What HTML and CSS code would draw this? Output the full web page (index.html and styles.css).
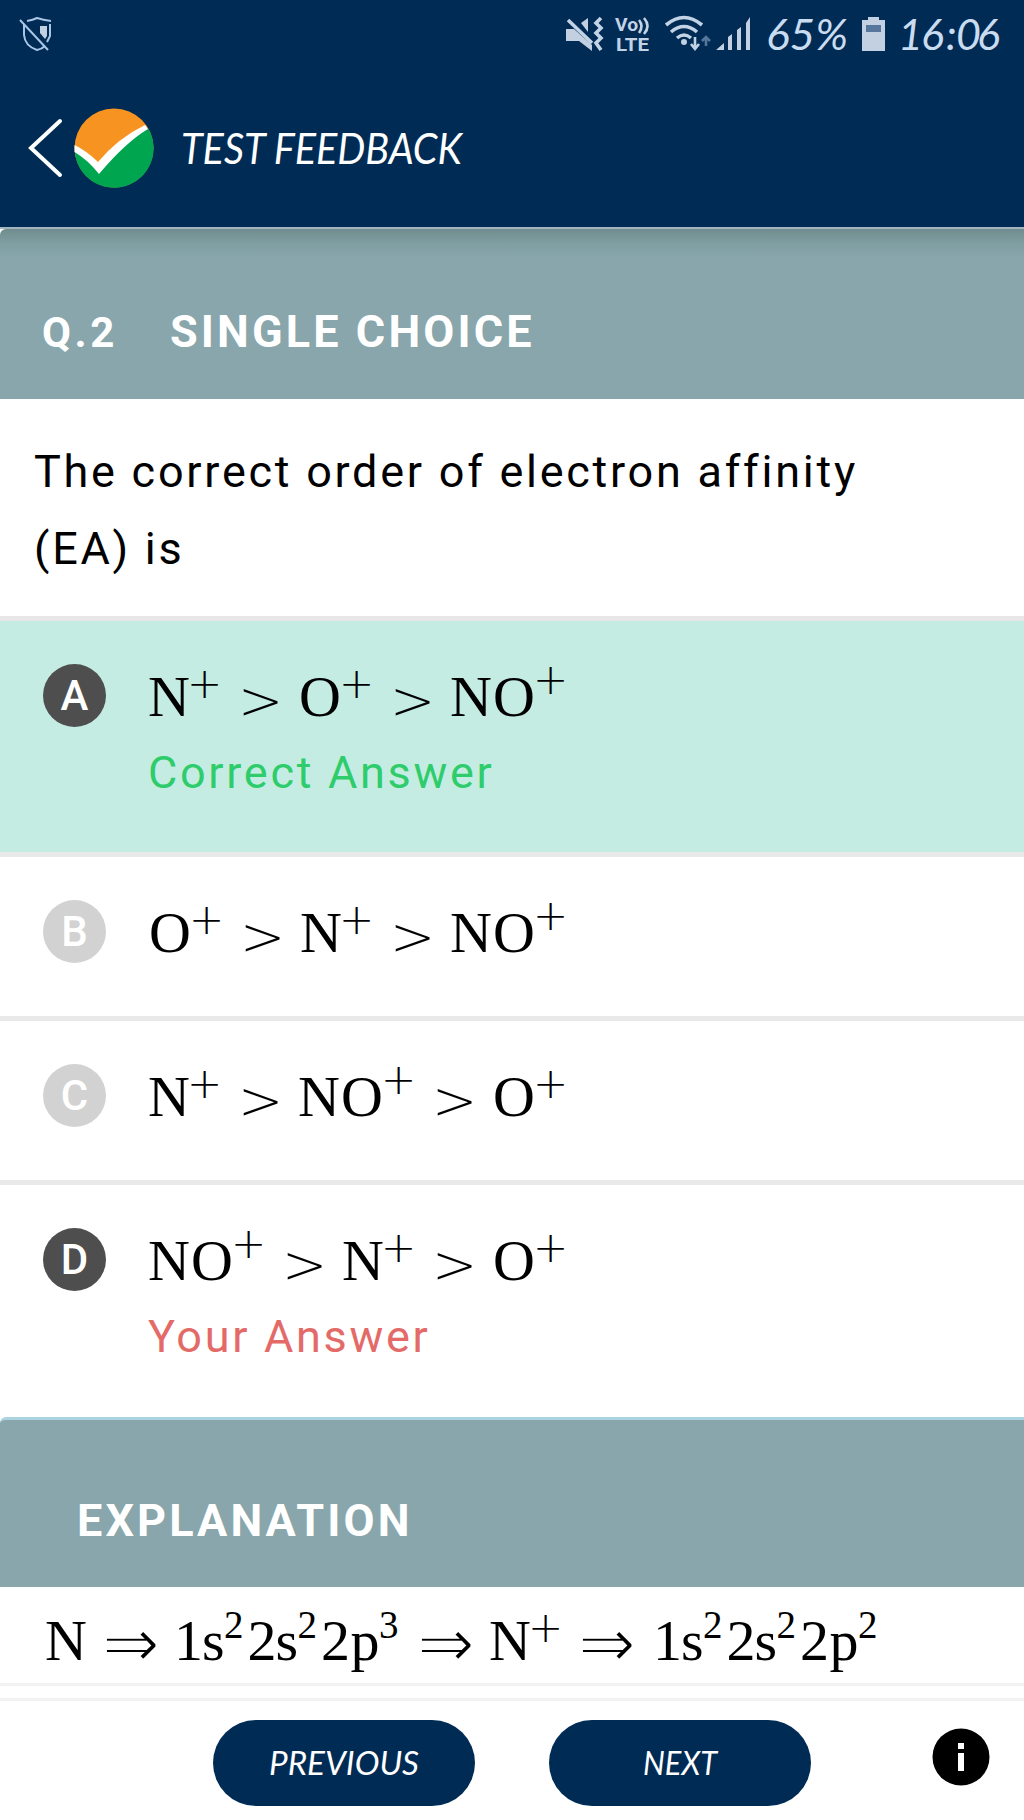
FILE: index.html
```html
<!DOCTYPE html>
<html lang="en">
<head>
    <meta charset="UTF-8">
    <meta name="viewport" content="width=device-width, initial-scale=1.0">
    <title>Test Feedback</title>
    <link rel="stylesheet" href="styles.css">
</head>
<body>
    <header class="header">
        <div class="status-bar">
            <svg class="shield" width="36" height="38" viewBox="18 15 36 38">
                <path d="M27 21 Q33 20 37 18 Q43 20 51 21 M24 25 V35 Q25 46 37 50 Q42 49 45 46 M50 24 V36 L47 42 M20 20 L48 50" />
                <path class="fill" d="M40 26 H47 V36 L45 39 L40 33 Z" />
            </svg>
            <svg class="status-icons" width="460" height="60" viewBox="560 0 460 60">
                <!-- muted -->
                <path class="fill" d="M566 29 H574 L592 45 V51 L579 41 H566 Z M581 23 L588 18 V32 Z" />
                <path class="thick" d="M568 20 L592 43" />
                <path class="thick" d="M601 18 L596 23 L601 28 L596 33 L601 38 L596 43 L601 50" />
                <!-- volte -->
                <text class="lte" x="615" y="31" textLength="23" lengthAdjust="spacingAndGlyphs">Vo</text>
                <path class="mid" d="M639 20 Q644 26 639 33 M644 18 Q651 26 644 34" />
                <text class="lte" x="616" y="51" textLength="33" lengthAdjust="spacingAndGlyphs">LTE</text>
                <!-- wifi -->
                <path class="thick" d="M666 25 Q684 10 702 25 M671 32 Q684 21 697 32 M677 38 Q684 32 691 38" />
                <circle class="fill" cx="684" cy="42" r="3" />
                <path class="mid" d="M695 37 V48 M691 44 L695 49 L699 44" />
                <path class="mid faded" d="M706 46 V37 M702 41 L706 37 L710 41" />
                <!-- signal -->
                <path class="fill" d="M716 50 L724 43 V50 Z M728 37 L732 34 V50 H728 Z M737 30 L741 27 V50 H737 Z M746 23 L750 17 V50 H746 Z" />
                <text class="hand" x="766" y="50" textLength="82" lengthAdjust="spacingAndGlyphs">65%</text>
                <path class="fill" d="M868 17 H879 V20 H885 V51 H862 V20 H868 Z" />
                <path class="battery-gap" d="M866 25 H881 V32 H866 Z" />
                <text class="hand" x="898 921 946 956 977" y="50">16:06</text>
            </svg>
        </div>
        <div class="title-bar">
            <svg class="back" width="40" height="68" viewBox="26 114 40 68">
                <path d="M60 121 L31 148 L60 175" />
            </svg>
            <svg class="logo" width="80" height="80" viewBox="0 0 80 80">
                <circle cx="40" cy="40" r="39.5" fill="#f79421" />
                <path d="M0.7 43 Q14 51 25 65 Q52 33 74 20 A39.5 39.5 0 1 1 0.7 43 Z" fill="#00a550" />
                <path d="M0.5 37 Q13 43 24 54 Q44 30 71 17 L74 21 Q52 34 25 66 Q14 52 0.5 44 Z" fill="#fff" />
            </svg>
            <svg class="title" width="300" height="60" viewBox="0 0 300 60">
                <text x="4" y="46" textLength="281" lengthAdjust="spacingAndGlyphs">TEST FEEDBACK</text>
            </svg>
        </div>
    </header>

    <section class="panel question-head">
        <span class="number">Q.2</span>
        <span class="type">SINGLE CHOICE</span>
    </section>

    <p class="question">The correct order of electron affinity (EA) is</p>

    <div class="option correct">
        <span class="letter">A</span>
        <div>
            <div class="math"><b>N</b><sup class="plus">+</sup><i>&gt;</i><b class="o">O</b><sup class="plus">+</sup><i>&gt;</i><b>N</b><b class="o">O</b><sup class="plus high">+</sup></div>
            <div class="note">Correct Answer</div>
        </div>
    </div>
    <div class="option">
        <span class="letter off">B</span>
        <div class="math"><b class="o">O</b><sup class="plus">+</sup><i>&gt;</i><b>N</b><sup class="plus">+</sup><i>&gt;</i><b>N</b><b class="o">O</b><sup class="plus high">+</sup></div>
    </div>
    <div class="option">
        <span class="letter off">C</span>
        <div class="math"><b>N</b><sup class="plus">+</sup><i>&gt;</i><b>N</b><b class="o">O</b><sup class="plus high">+</sup><i>&gt;</i><b class="o">O</b><sup class="plus">+</sup></div>
    </div>
    <div class="option wrong">
        <span class="letter">D</span>
        <div>
            <div class="math"><b>N</b><b class="o">O</b><sup class="plus high">+</sup><i>&gt;</i><b>N</b><sup class="plus">+</sup><i>&gt;</i><b class="o">O</b><sup class="plus">+</sup></div>
            <div class="note">Your Answer</div>
        </div>
    </div>

    <section class="panel explanation-head">EXPLANATION</section>

    <div class="explanation">
        <div class="math"><b>N</b><em>⇒</em><b class="d">1</b><b class="s">s</b><sup>2</sup><b class="d">2</b><b class="s">s</b><sup>2</sup><b class="d">2</b><b class="p">p</b><sup>3</sup><em>⇒</em><b>N</b><sup class="plus">+</sup><em class="wide">⇒</em><b class="d">1</b><b class="s">s</b><sup>2</sup><b class="d">2</b><b class="s">s</b><sup>2</sup><b class="d">2</b><b class="p">p</b><sup>2</sup></div>
    </div>

    <footer class="footer">
        <button class="nav-button">
            <svg width="160" height="50" viewBox="0 0 160 50"><text x="5" y="37" textLength="150" lengthAdjust="spacingAndGlyphs">PREVIOUS</text></svg>
        </button>
        <button class="nav-button">
            <svg width="90" height="50" viewBox="0 0 90 50"><text x="8" y="37" textLength="74" lengthAdjust="spacingAndGlyphs">NEXT</text></svg>
        </button>
        <svg class="info" width="58" height="58" viewBox="0 0 58 58">
            <circle cx="29" cy="29" r="28.5" />
            <path d="M26 15 H32 V21 H26 Z M26 25 H32 V43 H26 Z" fill="#fff" />
        </svg>
    </footer>
</body>
</html>
```
FILE: styles.css
```css
* {
    box-sizing: border-box;
}

body {
    margin: 0;
    width: 1024px;
    height: 1820px;
    overflow: hidden;
    background-color: #fff;
    font-family: Roboto, sans-serif;
    color: #000;
}

.header {
    height: 229px;
    background-color: #002b54;
    border-bottom: 2px solid #a3b6bf;
}

.status-bar {
    display: flex;
    justify-content: space-between;
    height: 60px;
    padding: 0 4px 0 18px;
}

.shield {
    margin-top: 15px;
    fill: none;
    stroke: #a9c6e6;
    stroke-width: 2;
}

.status-icons {
    fill: none;
    stroke: #c3d3e6;
}

.shield .fill,
.status-icons .fill {
    fill: #c3d0e2;
    stroke: none;
}

.thick {
    stroke-width: 3.6;
}

.mid {
    stroke-width: 2.6;
}

.faded {
    stroke: #56779b;
}

.battery-gap {
    fill: #56779b;
    stroke: none;
}

.lte {
    font: bold 18px Roboto, sans-serif;
    fill: #c3d3e6;
    stroke: none;
}

.hand {
    font: italic 43px Lato, sans-serif;
    fill: #c9dcf0;
    stroke: none;
}

.title-bar {
    display: flex;
    align-items: center;
    height: 176px;
    padding-left: 26px;
}

.back {
    fill: none;
    stroke: #fff;
    stroke-width: 4;
    stroke-linecap: round;
}

.logo {
    margin-left: 8px;
}

.title {
    margin-left: 23px;
    overflow: visible;
    font: italic 42px Lato, sans-serif;
    fill: #fff;
}

.panel {
    background-color: #88a6ab;
    color: #fff;
    font-size: 45px;
    font-weight: bold;
    letter-spacing: 3.1px;
}

.question-head {
    display: flex;
    align-items: baseline;
    height: 170px;
    padding: 76px 0 0 42px;
    background-image: linear-gradient(#708c8e, #7f9ea1 14px, #88a6ab 28px);
    border-radius: 6px 0 0 0;
}

.number {
    width: 128px;
    font-size: 42px;
    letter-spacing: 3.6px;
}

.question {
    height: 222px;
    margin: 0;
    padding: 34px 100px 0 34px;
    border-bottom: 5px solid #e8e6e6;
    font-size: 45px;
    line-height: 77px;
    letter-spacing: 2.74px;
}

.option {
    display: flex;
    align-items: flex-start;
    height: 164px;
    padding: 43px 0 0 43px;
    border-bottom: 5px solid #e9e9e9;
}

.correct {
    height: 236px;
    background-color: #c4ece3;
}

.wrong {
    height: 232px;
    border-bottom: none;
}

.letter {
    width: 63px;
    height: 63px;
    margin-right: 42px;
    border-radius: 50%;
    background-color: #4e4e4e;
    color: #fff;
    font-size: 42px;
    font-weight: 500;
    line-height: 64px;
    text-align: center;
}

.letter.off {
    background-color: #d2d2d2;
}

.note {
    height: 60px;
    margin-top: 9px;
    font-size: 45px;
    line-height: 60px;
    letter-spacing: 2.7px;
    color: #2ecc6b;
}

.wrong .note {
    color: #e46a68;
}

/* formulas */
.math {
    display: flex;
    height: 70px;
    font-family: "Liberation Serif", serif;
    font-size: 58px;
}

.math > * {
    flex: none;
    width: 42px;
    height: 70px;
    line-height: 66px;
    font-weight: normal;
    font-style: normal;
    text-align: center;
}

.math .o {
    width: 44px;
}

.math .d {
    width: 28px;
}

.math .s {
    width: 22px;
}

.math .p {
    width: 32px;
}

.math sup {
    width: 23.5px;
    font-size: 39px;
    line-height: 34px;
    text-align: left;
}

.math .p + sup {
    width: 21px;
    text-indent: -2px;
}

.math .plus,
.math i,
.math em {
    font-family: "DejaVu Sans", sans-serif;
    font-weight: 200;
}

.math .plus {
    width: 30px;
    font-size: 42px;
    line-height: 40px;
    text-align: center;
    text-indent: -3px;
}

.math .high {
    line-height: 32px;
}

.math i {
    width: 78px;
    padding-left: 3px;
    font-size: 54px;
    line-height: 74px;
}

/* the glyph is heavy, the outline in page colour thins it */
.math em {
    width: 87px;
    font-size: 69px;
    line-height: 70px;
    -webkit-text-stroke: 2px #fff;
}

.math .wide {
    width: 92px;
}

.explanation-head {
    height: 170px;
    padding: 74px 0 0 77px;
    border-top: 3px solid #acd3e2;
    border-radius: 6px 0 0 0;
}

.explanation {
    height: 99px;
    padding: 21px 0 0 45px;
    border-bottom: 3px solid #f2f2f2;
}

.footer {
    display: flex;
    align-items: flex-start;
    height: 121px;
    margin-top: 12px;
    padding: 19px 0 0 213px;
    border-top: 3px solid #f2f2f2;
}

.nav-button {
    display: flex;
    align-items: center;
    justify-content: center;
    width: 262px;
    height: 86px;
    margin-right: 74px;
    padding: 0;
    border: none;
    border-radius: 43px;
    background-color: #002b54;
    font: italic 33px Lato, sans-serif;
}

.nav-button svg {
    fill: #fff;
}

.info {
    margin: 8px 0 0 47px;
}
```
